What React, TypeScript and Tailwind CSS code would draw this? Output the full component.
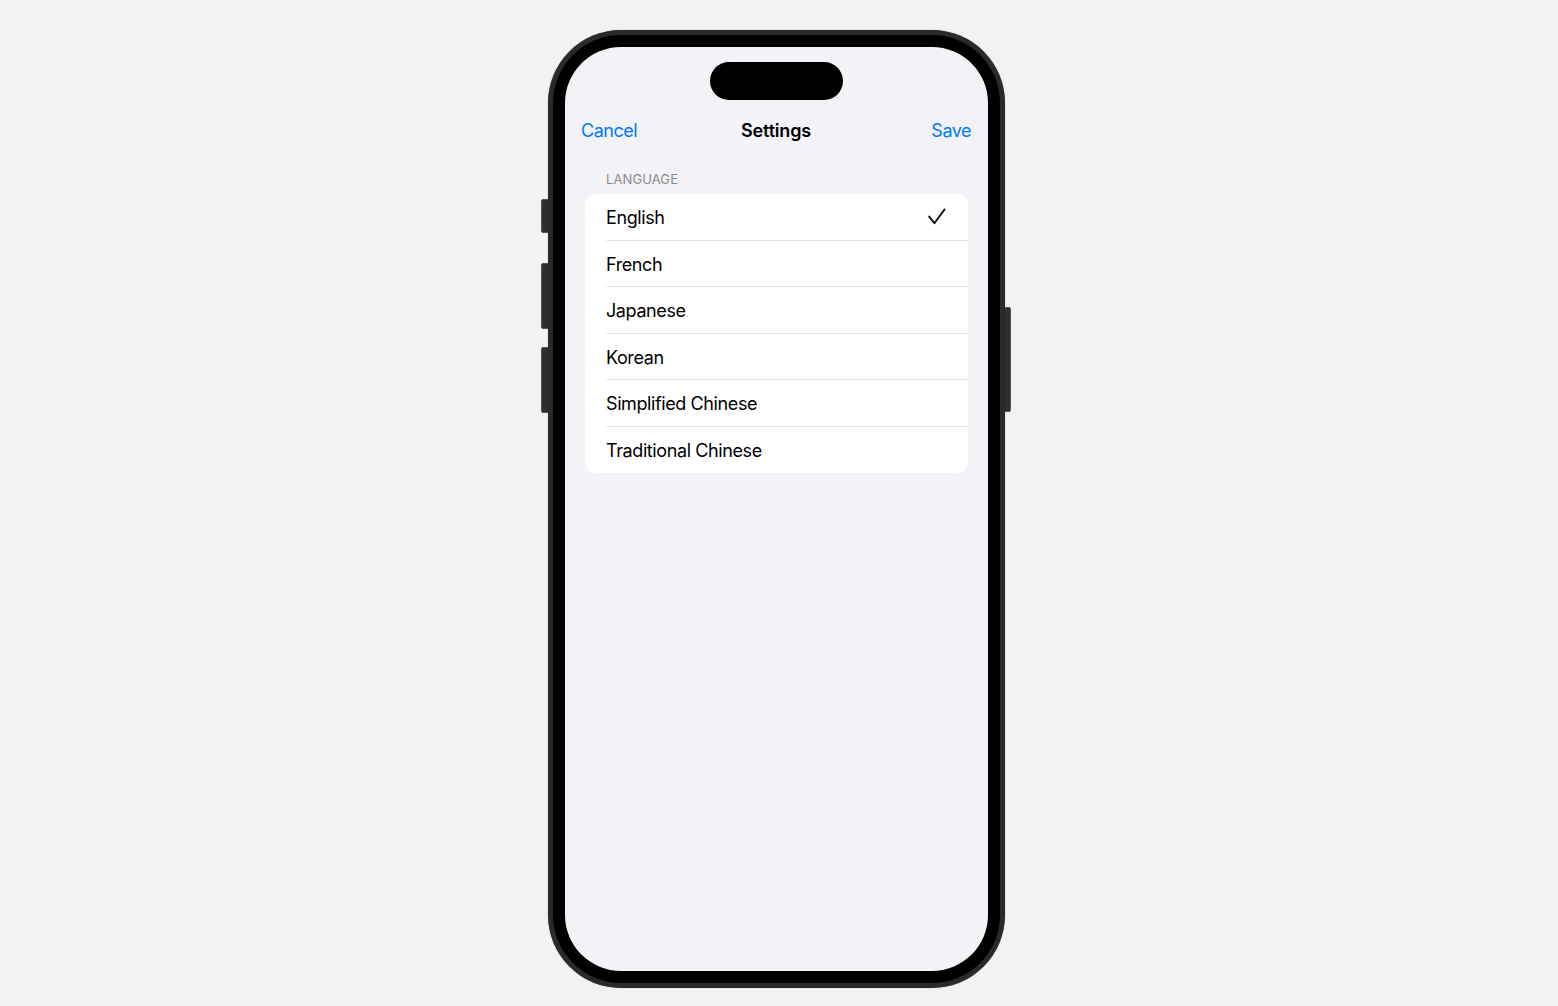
const languages = [
  'English',
  'French',
  'Japanese',
  'Korean',
  'Simplified Chinese',
  'Traditional Chinese',
];

function Checkmark() {
  return (
    <svg width="18" height="17" viewBox="0 0 18 17" fill="none" className="block">
      <path
        d="M1.2 8.6 L6.4 15.2 L16.6 1.4"
        stroke="#111"
        strokeWidth="1.9"
        strokeLinecap="round"
        strokeLinejoin="round"
      />
    </svg>
  );
}

function LanguageRow({ name, selected, last }: { name: string; selected: boolean; last: boolean }) {
  return (
    <div className="flex h-[46.5px] pl-[21px]">
      <div
        className={`flex flex-1 items-center justify-between pr-[22px] pt-[2px] ${
          last ? '' : 'border-b border-[#e3e3e8]'
        }`}
      >
        <span className="text-[18px] text-black tracking-[-0.4px]">{name}</span>
        {selected && (
          <span className="-mt-[2px]">
            <Checkmark />
          </span>
        )}
      </div>
    </div>
  );
}

export default function App() {
  const selected = 'English';

  return (
    <div
      className="min-h-screen bg-[#f2f2f2] flex justify-center pt-[30px]"
      style={{ fontFamily: 'Inter, "Noto Sans", "Liberation Sans", sans-serif' }}
    >
      <div className="relative w-[457px] h-[958px] ml-[-5px]">
        {/* side buttons */}
        <div className="absolute left-[-7px] top-[169px] w-[8px] h-[34px] rounded-l-[2px] bg-[#2f2f2f] border border-[#555]" />
        <div className="absolute left-[-7px] top-[233px] w-[8px] h-[66px] rounded-l-[2px] bg-[#2f2f2f] border border-[#555]" />
        <div className="absolute left-[-7px] top-[317px] w-[8px] h-[66px] rounded-l-[2px] bg-[#2f2f2f] border border-[#555]" />
        <div className="absolute right-[-6px] top-[277px] w-[8px] h-[105px] rounded-r-[2px] bg-[#2f2f2f] border border-[#555]" />

        <div className="relative h-full rounded-[73px] bg-[#2a2a2a] p-[5px] shadow-[0_0_1px_rgba(0,0,0,0.5)]">
          <div className="h-full rounded-[68px] bg-black p-[12px]">
            <div className="h-full rounded-[56px] bg-[#f2f2f7] overflow-hidden flex flex-col pt-[15px]">
              {/* dynamic island */}
              <div className="mx-auto w-[133px] h-[38px] rounded-full bg-black shrink-0" />

              {/* nav bar */}
              <div className="mt-[8px] h-[44px] grid grid-cols-[1fr_auto_1fr] items-center pl-[16px] pr-[17px]">
                <button className="justify-self-start text-[18px] text-[#007aff] tracking-[-0.5px]">Cancel</button>
                <span className="text-[18px] font-semibold text-black tracking-[-0.2px]">Settings</span>
                <button className="justify-self-end text-[18px] text-[#007aff] tracking-[-0.5px]">Save</button>
              </div>

              {/* section */}
              <div className="pl-[20px] pr-[20px]">
                <div className="pt-[19px] pb-[7px] pl-[21px] text-[13px] leading-[16px] text-[#8a8a8e] tracking-[0.1px]">
                  LANGUAGE
                </div>
                <div className="bg-white rounded-[11px] overflow-hidden">
                  {languages.map((lang, i) => (
                    <LanguageRow
                      key={lang}
                      name={lang}
                      selected={lang === selected}
                      last={i === languages.length - 1}
                    />
                  ))}
                </div>
              </div>
            </div>
          </div>
        </div>
      </div>
    </div>
  );
}
